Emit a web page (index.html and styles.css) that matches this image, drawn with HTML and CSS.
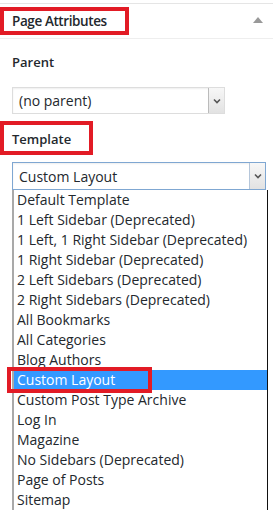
FILE: index.html
```html
<!DOCTYPE html>
<html lang="en">
<head>
    <meta charset="UTF-8">
    <title>Page Attributes</title>
    <link rel="stylesheet" href="styles.css">
</head>
<body>
    <div class="postbox">
        <div class="hndle">
            <span class="mark mark-title">Page Attributes</span>
            <span class="toggle"></span>
        </div>
        <div class="inside">
            <p class="label">Parent</p>
            <div class="select select-parent">
                <span>(no parent)</span>
                <span class="arrow"><svg width="8" height="6" viewBox="0 0 8 6"><path d="M1 1.5 L4 4.5 L7 1.5" fill="none" stroke="#555" stroke-width="1.6"/></svg></span>
            </div>
            <p class="label mark mark-label">Template</p>
            <div class="template-field">
                <div class="select select-template">
                    <span>Custom Layout</span>
                    <span class="arrow"><svg width="8" height="6" viewBox="0 0 8 6"><path d="M1 1.5 L4 4.5 L7 1.5" fill="none" stroke="#555" stroke-width="1.6"/></svg></span>
                </div>
                <ul class="options">
                    <li>Default Template</li>
                    <li>1 Left Sidebar (Deprecated)</li>
                    <li>1 Left, 1 Right Sidebar (Deprecated)</li>
                    <li>1 Right Sidebar (Deprecated)</li>
                    <li>2 Left Sidebars (Deprecated)</li>
                    <li>2 Right Sidebars (Deprecated)</li>
                    <li>All Bookmarks</li>
                    <li>All Categories</li>
                    <li>Blog Authors</li>
                    <li class="selected"><span class="mark mark-option">Custom Layout</span></li>
                    <li>Custom Post Type Archive</li>
                    <li>Log In</li>
                    <li>Magazine</li>
                    <li>No Sidebars (Deprecated)</li>
                    <li>Page of Posts</li>
                    <li>Sitemap</li>
                </ul>
            </div>
        </div>
    </div>
</body>
</html>
```

FILE: styles.css
```css
* {
    margin: 0;
    padding: 0;
    box-sizing: border-box;
}

body {
    background: #fff;
    font-family: "Open Sans", sans-serif;
    color: #23282d;
    width: 273px;
    overflow: hidden;
}

.postbox {
    border-top: 1px solid #e5e5e5;
    margin-top: 3px;
}

.hndle {
    height: 35px;
    display: flex;
    align-items: center;
    justify-content: space-between;
    border-bottom: 1px solid #eee;
    padding-right: 10px;
}

.mark {
    border: 4px solid #e21b25;
}

.mark-title {
    font-size: 13.5px;
    font-weight: 600;
    letter-spacing: -0.4px;
    padding: 0 18px 0 8px;
    line-height: 20px;
}

.toggle {
    width: 0;
    height: 0;
    border-left: 5px solid transparent;
    border-right: 5px solid transparent;
    border-bottom: 6px solid #999;
    margin-top: -2px;
}

.inside {
    padding: 14px 0 0 12px;
}

.label {
    font-size: 13px;
    font-weight: 600;
    line-height: 18px;
}

.select {
    display: flex;
    justify-content: space-between;
    align-items: center;
    border: 1px solid #ddd;
    background: #fff;
    box-shadow: inset 0 1px 2px rgba(0, 0, 0, 0.07);
    font-size: 14px;
    padding-left: 6px;
}

.select-parent {
    width: 213px;
    height: 27px;
    margin-top: 16px;
}

.arrow {
    display: flex;
    align-items: center;
    justify-content: center;
    width: 16px;
    align-self: stretch;
    background: linear-gradient(#f7f7f7, #e2e2e2);
    border-left: 1px solid #bbb;
}

.mark-label {
    width: fit-content;
    margin: 7px 0 0 -12px;
    padding: 5px 18px 3px 8px;
}

.template-field {
    margin-top: 7px;
    width: 256px;
}

.select-template {
    height: 28px;
    width: 254px;
    border-color: #7fa7d2;
}

.select-template .arrow {
    border-left-color: #b5c6da;
}

.options {
    list-style: none;
    border-left: 2px solid #a9a9a9;
    border-right: 1px solid #111;
    background: #fff;
    font-size: 14px;
    width: 256px;
}

.options li {
    height: 20px;
    line-height: 20px;
    padding-left: 3px;
    white-space: nowrap;
}

.options li.selected {
    background: #3399ff;
    color: #fff;
    position: relative;
}

.mark-option {
    position: absolute;
    left: -7px;
    top: -3px;
    width: 145px;
    height: 26px;
    padding-left: 6px;
    line-height: 18px;
}
```
